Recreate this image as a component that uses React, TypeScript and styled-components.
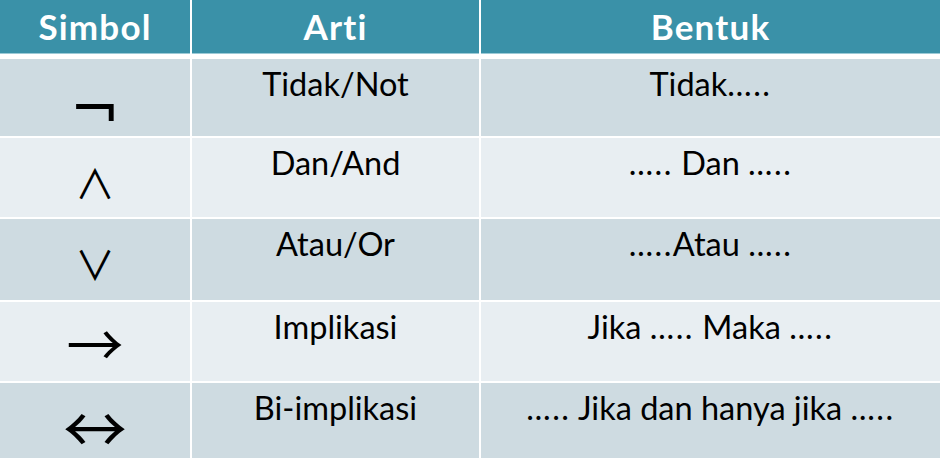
import React from "react";
import styled, { createGlobalStyle } from "styled-components";

const Global = createGlobalStyle`
  html, body { margin: 0; padding: 0; background: #ffffff; }
  body { width: 940px; height: 458px; overflow: hidden; }
`;

const Table = styled.div`
  display: grid;
  grid-template-columns: 190px 287px 1fr;
  grid-template-rows: 57px 77px 79px 81px 79px 1fr;
  column-gap: 2px;
  row-gap: 2px;
  width: 940px;
  height: 458px;
  background: #ffffff;
  font-family: "Lato", "Open Sans", sans-serif;
`;

const HeadCell = styled.div`
  align-self: start;
  height: 54px;
  box-sizing: border-box;
  background: #3a91a8;
  box-shadow: inset 0 -1px 0 #9ccad6;
  color: #ffffff;
  font-weight: 700;
  font-size: 35px;
  line-height: 1.2;
  letter-spacing: 1.2px;
  display: flex;
  align-items: flex-start;
  justify-content: center;
  padding-top: 5px;
`;

const Cell = styled.div<{ $alt: boolean }>`
  background: ${(p) => (p.$alt ? "#e8eef2" : "#cedbe1")};
  color: #000000;
  font-size: 32.5px;
  line-height: 1.2;
  display: flex;
  justify-content: center;
  align-items: flex-start;
  padding-top: 5px;
  box-sizing: border-box;
  white-space: pre;
`;

const SymbolCell = styled(Cell)<{ $size: number; $pt: number; $font: string }>`
  font-family: ${(p) => p.$font};
  font-size: ${(p) => p.$size}px;
  line-height: 1;
  align-items: center;
  padding-top: ${(p) => p.$pt}px;
  overflow: visible;
`;

const Dots = styled.span`
  letter-spacing: 1.5px;
`;

const CJK = `"Noto Sans CJK JP", "DejaVu Sans", sans-serif`;
const DEJAVU = `"DejaVu Sans", sans-serif`;

const rows = [
  { s: "¬", size: 60, pt: 23, font: DEJAVU, a: "Tidak/Not", b: "Tidak….." },
  { s: "∧", size: 40, pt: 9, font: CJK, a: "Dan/And", b: "….. Dan ….." },
  { s: "∨", size: 40, pt: 7, font: CJK, a: "Atau/Or", b: "…..Atau ….." },
  { s: "→", size: 57, pt: 0, font: CJK, a: "Implikasi", b: "Jika ….. Maka ….." },
  { s: "↔", size: 64, pt: 8, font: CJK, a: "Bi-implikasi", b: "….. Jika dan hanya jika ….." },
];

function withDots(text: string) {
  return text.split(/(…\.\.)/).map((part, i) =>
    part === "….." ? <Dots key={i}>{part}</Dots> : <React.Fragment key={i}>{part}</React.Fragment>
  );
}

export default function App() {
  return (
    <>
      <Global />
      <Table>
        <HeadCell>Simbol</HeadCell>
        <HeadCell>Arti</HeadCell>
        <HeadCell>Bentuk</HeadCell>
        {rows.map((r, i) => (
          <React.Fragment key={i}>
            <SymbolCell $alt={i % 2 === 1} $size={r.size} $pt={r.pt} $font={r.font}>
              {r.s}
            </SymbolCell>
            <Cell $alt={i % 2 === 1}>{r.a}</Cell>
            <Cell $alt={i % 2 === 1}>{withDots(r.b)}</Cell>
          </React.Fragment>
        ))}
      </Table>
    </>
  );
}
